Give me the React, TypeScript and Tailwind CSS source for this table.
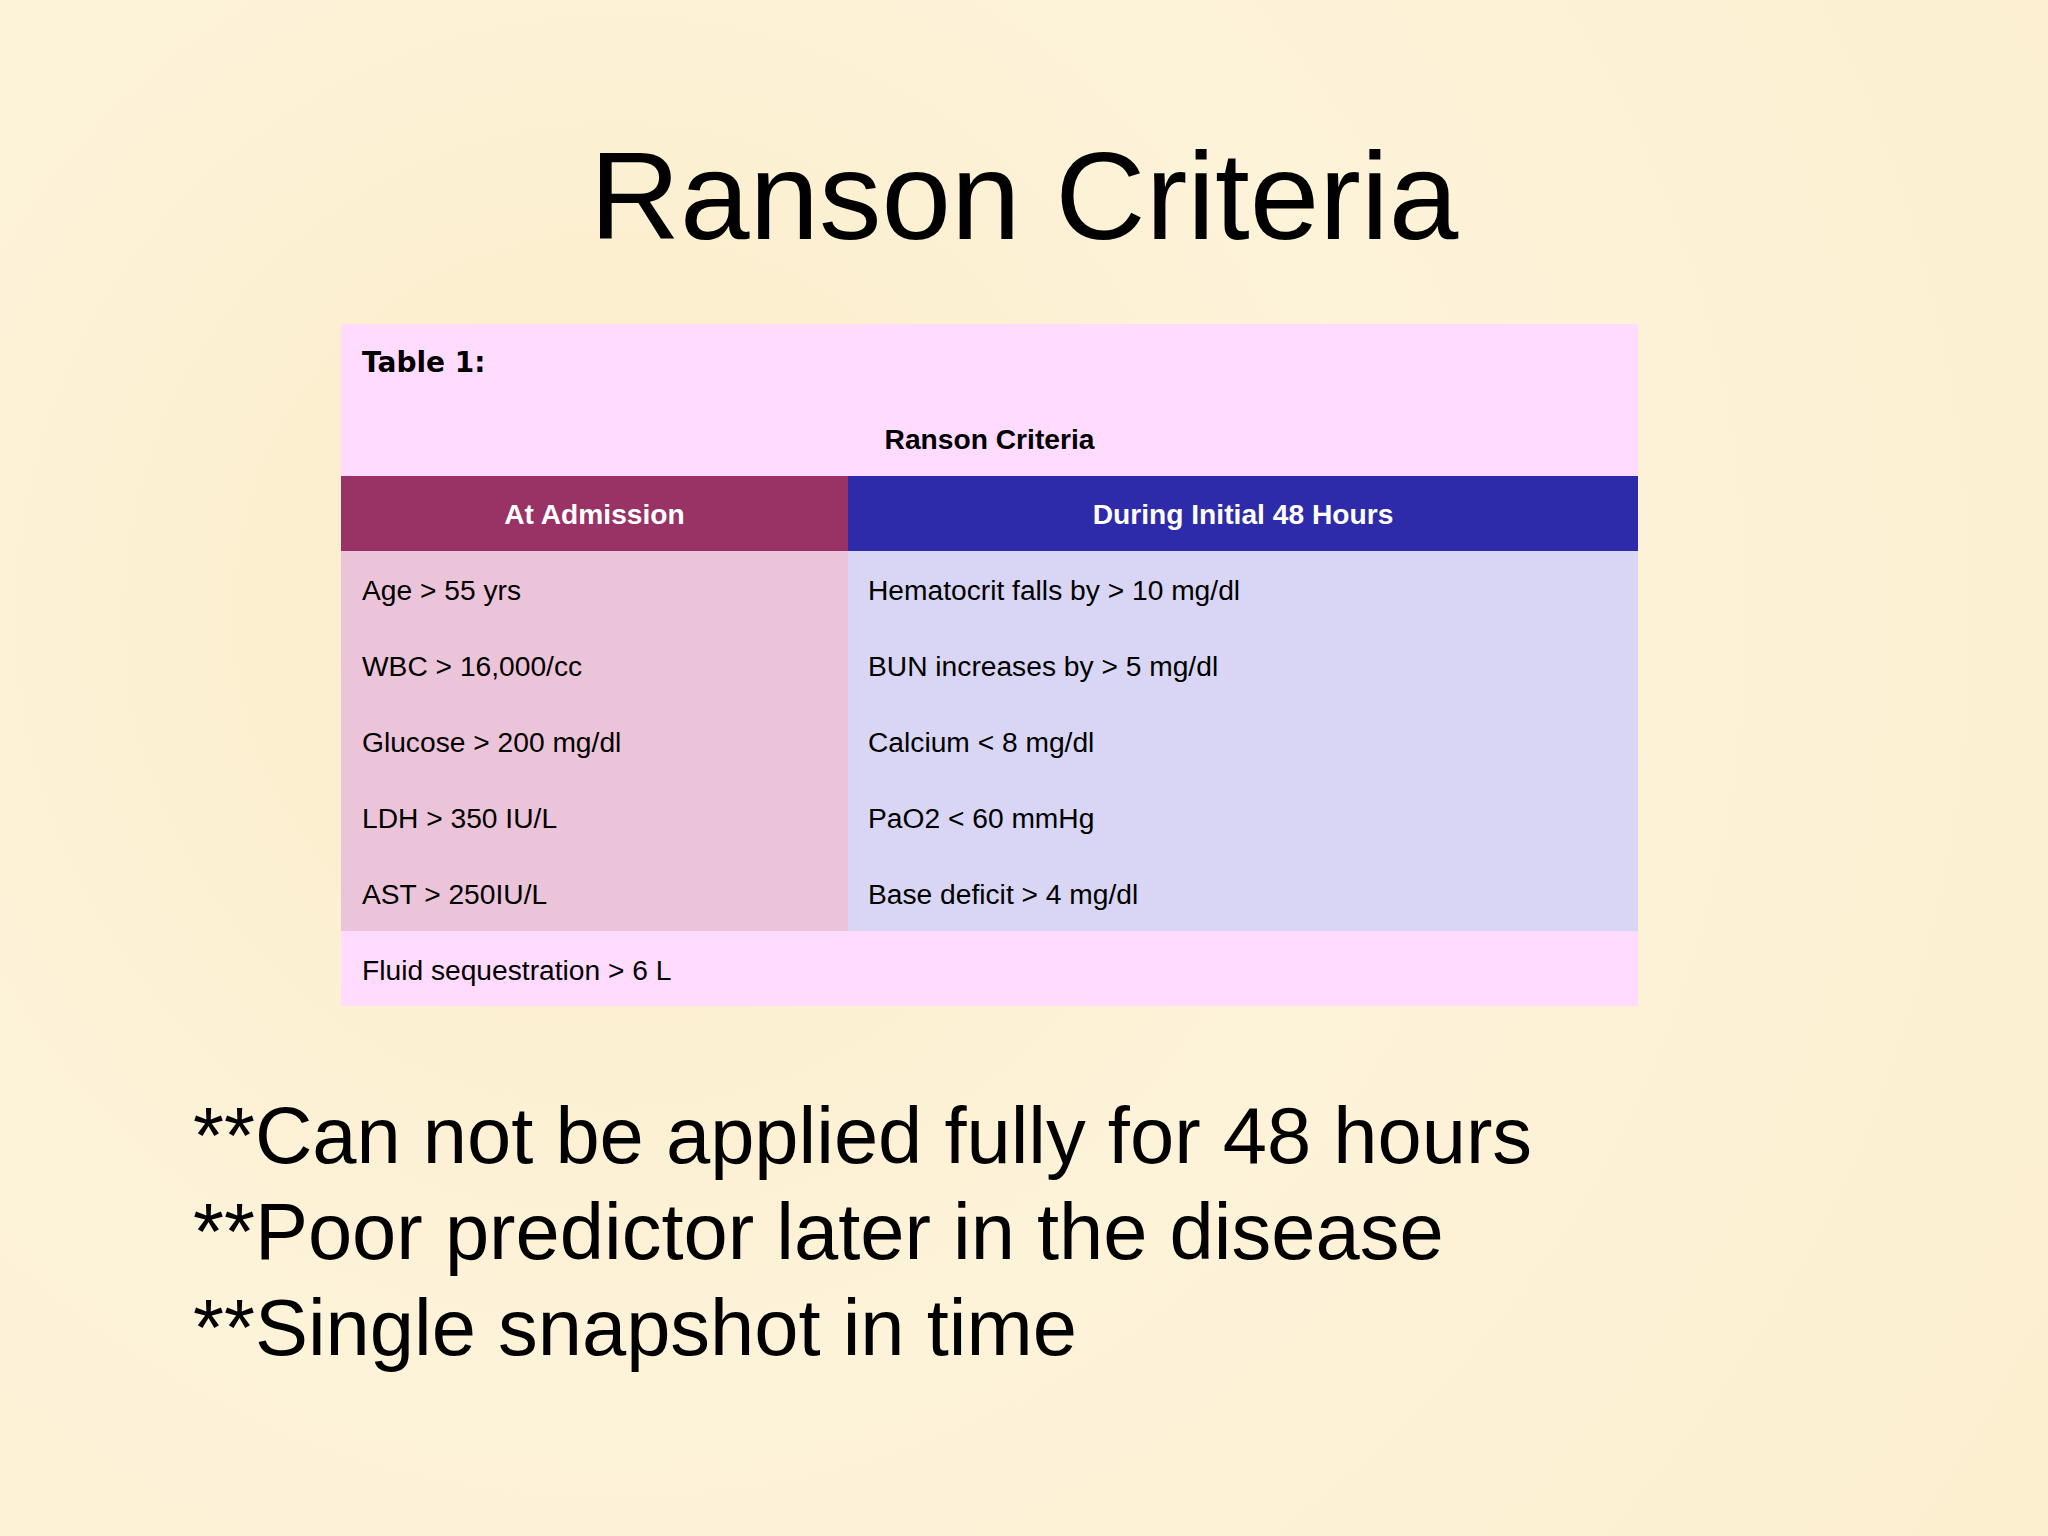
const admission = [
  "Age > 55 yrs",
  "WBC > 16,000/cc",
  "Glucose > 200 mg/dl",
  "LDH > 350 IU/L",
  "AST > 250IU/L",
];

const initial48 = [
  "Hematocrit falls by > 10 mg/dl",
  "BUN increases by > 5 mg/dl",
  "Calcium < 8 mg/dl",
  "PaO2 < 60 mmHg",
  "Base deficit > 4 mg/dl",
];

const notes = [
  "**Can not be applied fully for 48 hours",
  "**Poor predictor later in the disease",
  "**Single snapshot in time",
];

export default function App() {
  return (
    <div className="w-[2048px] h-[1536px] overflow-hidden bg-[#fcf0d3] bg-[radial-gradient(circle_at_30%_40%,#fbecc9_0%,#fdf3d9_45%,#fcefd0_100%)] font-['Liberation_Sans',Arial,sans-serif] text-black">
      <h1 className="pt-[133px] text-center text-[125px] leading-[125px] font-normal">
        Ranson Criteria
      </h1>

      <div className="ml-[341px] mt-[66px] w-[1297px] grid grid-cols-[507px_790px] text-[28.2px]">
        {/* caption rows */}
        <div className="col-span-2 h-[76px] bg-[#ffdbff] flex items-center px-[21px] pt-[2px]">
          <span className="font-['DejaVu_Sans',sans-serif] font-bold text-[28px]">Table 1:</span>
        </div>
        <div className="col-span-2 h-[76px] bg-[#ffdbff] flex items-center justify-center font-bold pt-[2px]">
          Ranson Criteria
        </div>

        {/* header */}
        <div className="h-[75px] bg-[#993366] text-white font-bold flex items-center justify-center pt-[2px]">
          At Admission
        </div>
        <div className="h-[75px] bg-[#2e2bab] text-white font-bold flex items-center justify-center pt-[2px]">
          During Initial 48 Hours
        </div>

        {/* body */}
        {admission.map((item, i) => (
          <div key={i} className="contents">
            <div className="h-[76px] bg-[#ecc4da] flex items-center px-[21px] pt-[3px]">{item}</div>
            <div className="h-[76px] bg-[#d8d6f4] flex items-center px-[20px] pt-[3px]">{initial48[i]}</div>
          </div>
        ))}

        <div className="col-span-2 h-[75px] bg-[#ffdbff] flex items-center px-[21px] pt-[3px]">
          Fluid sequestration &gt; 6 L
        </div>
      </div>

      <div className="ml-[193px] mt-[82px] text-[79.5px] leading-[96px]">
        {notes.map((n) => (
          <p key={n}>{n}</p>
        ))}
      </div>
    </div>
  );
}
